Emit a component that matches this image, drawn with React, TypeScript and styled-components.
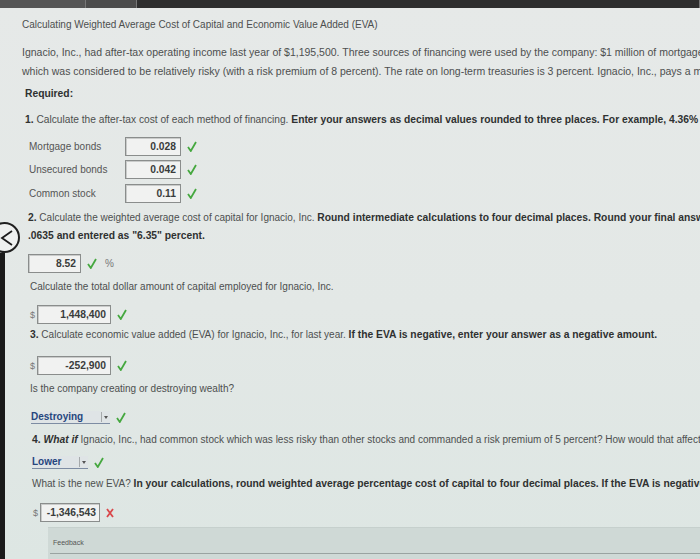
import * as React from 'react'
import styled, { createGlobalStyle } from 'styled-components'

const GlobalStyle = createGlobalStyle`
	html, body {
		margin: 0;
		padding: 0;
		overflow: hidden;
		background: #e4e8e6;
	}
`

const FONT = `"Liberation Sans", Arial, sans-serif`

export default function App() {
	return (
		<Screen>
			<GlobalStyle />
			<TabStrip>
				<Tab $width={85} $tone="#555" />
				<Tab $width={50} $tone="#4c4c4c" />
				<Tab $tone="#2e2e2e" />
			</TabStrip>
			<Page>
				<Line $top={10}>Calculating Weighted Average Cost of Capital and Economic Value Added (EVA)</Line>
				<Line $top={13} $size={10.5}>
					Ignacio, Inc., had after-tax operating income last year of $1,195,500. Three sources of financing were used by the company: $1 million of mortgage bonds
				</Line>
				<Line $top={5} $size={10.5}>
					which was considered to be relatively risky (with a risk premium of 8 percent). The rate on long-term treasuries is 3 percent. Ignacio, Inc., pays a marginal
				</Line>
				<Line $top={9} $indent={3}><B>Required:</B></Line>
				<Line $top={12} $indent={3} $size={10.2}>
					<B>1.</B> Calculate the after-tax cost of each method of financing. <B>Enter your answers as decimal values rounded to three places. For example, 4.36% should</B>
				</Line>

				<FieldRow $top={10} $indent={7}>
					<RowLabel>Mortgage bonds</RowLabel>
					<AnswerBox $width={56}>0.028</AnswerBox>
					<Check />
				</FieldRow>
				<FieldRow $top={4} $indent={7}>
					<RowLabel>Unsecured bonds</RowLabel>
					<AnswerBox $width={56}>0.042</AnswerBox>
					<Check />
				</FieldRow>
				<FieldRow $top={5} $indent={7}>
					<RowLabel>Common stock</RowLabel>
					<AnswerBox $width={56}>0.11</AnswerBox>
					<Check />
				</FieldRow>

				<Line $top={8} $indent={6}>
					<B>2.</B> Calculate the weighted average cost of capital for Ignacio, Inc. <B>Round intermediate calculations to four decimal places. Round your final answer</B>
				</Line>
				<Line $top={4} $indent={6}><B>.0635 and entered as "6.35" percent.</B></Line>
				<FieldRow $top={11} $indent={6}>
					<AnswerBox $width={53}>8.52</AnswerBox>
					<Check />
					<Unit>%</Unit>
				</FieldRow>

				<Line $top={7} $indent={8}>Calculate the total dollar amount of capital employed for Ignacio, Inc.</Line>
				<FieldRow $top={11} $indent={8}>
					<Dollar>$</Dollar>
					<AnswerBox $width={74}>1,448,400</AnswerBox>
					<Check />
				</FieldRow>

				<Line $top={4} $indent={8}>
					<B>3.</B> Calculate economic value added (EVA) for Ignacio, Inc., for last year. <B>If the EVA is negative, enter your answer as a negative amount.</B>
				</Line>
				<FieldRow $top={14} $indent={8}>
					<Dollar>$</Dollar>
					<AnswerBox $width={74}>-252,900</AnswerBox>
					<Check />
				</FieldRow>

				<Line $top={7} $indent={8}>Is the company creating or destroying wealth?</Line>
				<FieldRow $top={14} $indent={9} $height={14}>
					<Select $width={79}>Destroying<SelectArrow /></Select>
					<Check />
				</FieldRow>

				<Line $top={9} $indent={10}>
					<B>4. <i>What if</i></B> Ignacio, Inc., had common stock which was less risky than other stocks and commanded a risk premium of 5 percent? How would that affect the
				</Line>
				<FieldRow $top={8} $indent={10} $height={14}>
					<Select $width={56}>Lower<SelectArrow /></Select>
					<Check />
				</FieldRow>

				<Line $top={8} $indent={10}>
					What is the new EVA? <B>In your calculations, round weighted average percentage cost of capital to four decimal places. If the EVA is negative, enter</B>
				</Line>
				<FieldRow $top={12} $indent={11}>
					<Dollar>$</Dollar>
					<AnswerBox $width={60} $pad={3}>-1,346,543</AnswerBox>
					<Cross />
				</FieldRow>

				<FeedbackPanel>
					<FeedbackLabel>Feedback</FeedbackLabel>
				</FeedbackPanel>
			</Page>

			<Bezel />
			<BackButton>
				<svg width="14" height="16" viewBox="0 0 14 16">
					<polyline points="12,1 2,8 12,15" fill="none" stroke="#1c1c1c" strokeWidth="1.8" />
				</svg>
			</BackButton>
		</Screen>
	)
}

const Check = () => (
	<Mark width="10" height="11" viewBox="0 0 10 11">
		<polyline points="1,6 3.8,10 9,1" fill="none" stroke="#45a83f" strokeWidth="1.8" />
	</Mark>
)

const Cross = () => (
	<Mark width="8" height="10" viewBox="0 0 8 10">
		<path d="M1 1 L7 9 M7 1 L1 9" stroke="#d9474a" strokeWidth="1.8" fill="none" />
	</Mark>
)

const Screen = styled.div`
	position: relative;
	width: 700px;
	height: 559px;
	overflow: hidden;
	background: linear-gradient(180deg, #e6e9e8 0%, #e3e8e6 55%, #dde6e3 100%);
	font-family: ${FONT};
	font-size: 10px;
	color: #4d4f4f;
`

const TabStrip = styled.div`
	display: flex;
	height: 8px;
	background: #2e2e2e;
`

const Tab = styled.div<{ $width?: number; $tone: string }>`
	flex: ${p => (p.$width ? `0 0 ${p.$width}px` : '1')};
	background: ${p => p.$tone};
	border-right: 1px solid #777;
`

const Page = styled.div`
	display: flex;
	flex-direction: column;
	width: 1000px;
	padding: 0 0 0 22px;
	white-space: nowrap;
`

const Line = styled.div<{ $top: number; $indent?: number; $size?: number }>`
	height: 14px;
	line-height: 14px;
	font-size: ${p => p.$size || 10}px;
	margin-top: ${p => p.$top}px;
	margin-left: ${p => p.$indent || 0}px;
`

const B = styled.b`
	font-weight: bold;
	font-size: 10.3px;
	color: #2f3131;
`

const FieldRow = styled.div<{ $top: number; $indent?: number; $height?: number }>`
	display: flex;
	align-items: center;
	height: ${p => p.$height || 19}px;
	margin-top: ${p => p.$top}px;
	margin-left: ${p => p.$indent || 0}px;
`

const RowLabel = styled.span`
	width: 96px;
	color: #555;
`

const AnswerBox = styled.div<{ $width: number; $pad?: number }>`
	box-sizing: border-box;
	width: ${p => p.$width}px;
	height: 19px;
	line-height: 17px;
	padding-right: ${p => p.$pad ?? 4}px;
	text-align: right;
	font-weight: bold;
	font-size: 10.3px;
	color: #3a3c3c;
	background: #f1f2f1;
	border: 1px solid #8a8d8c;
	box-shadow: inset 1px 1px 0 #c9cbca;
`

const Mark = styled.svg`
	margin-left: 6px;
	flex: none;
`

const Unit = styled.span`
	margin-left: 8px;
	color: #777;
`

const Dollar = styled.span`
	width: 7px;
	font-size: 9px;
	color: #777;
`

const Select = styled.div<{ $width: number }>`
	position: relative;
	box-sizing: border-box;
	width: ${p => p.$width}px;
	height: 13px;
	line-height: 12px;
	font-weight: bold;
	color: #26467e;
	border-bottom: 1px solid #7d8ca3;
	background: #dfe4e6;
`

const SelectArrow = styled.span`
	position: absolute;
	right: 0;
	top: 1px;
	width: 8px;
	height: 10px;
	border-left: 1px solid #a5a9ab;
	&::after {
		content: '';
		position: absolute;
		left: 2px;
		top: 4px;
		border-left: 2px solid transparent;
		border-right: 2px solid transparent;
		border-top: 3px solid #555;
	}
`

const FeedbackPanel = styled.div`
	margin: 5px 0 0 26px;
	height: 40px;
	padding: 8px 0 0 5px;
	background: #cfd9d6;
	border-top: 1px solid #c6d0cd;
	box-sizing: border-box;
	position: relative;
	&::after {
		content: '';
		position: absolute;
		left: 2px;
		right: 0;
		top: 25px;
		border-top: 1px solid #9aa3a1;
	}
`

const FeedbackLabel = styled.span`
	font-size: 7px;
	color: #555;
`

const Bezel = styled.div`
	position: absolute;
	left: 0;
	top: 253px;
	bottom: 0;
	width: 5px;
	background: #1a1a1a;
`

const BackButton = styled.div`
	position: absolute;
	left: -11px;
	top: 222px;
	width: 31px;
	height: 31px;
	box-sizing: border-box;
	border: 2px solid #1f1f1f;
	border-radius: 50%;
	background: #eef0ef;
	display: flex;
	align-items: center;
	justify-content: flex-end;
	padding-right: 4px;
`
